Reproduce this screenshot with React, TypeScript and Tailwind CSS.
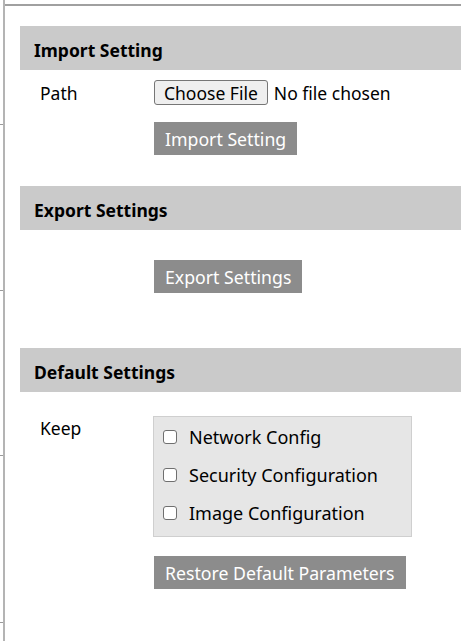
import React from "react";

function SectionHeader({ title }: { title: string }) {
  return (
    <div className="flex h-[44px] items-center bg-[#cacaca] pl-[14px] pt-[3px] text-[17.5px] font-bold text-black">
      {title}
    </div>
  );
}

function GrayButton({ label }: { label: string }) {
  return (
    <button
      type="button"
      className="h-[33px] bg-[#8c8c8c] px-[11px] pt-[2px] text-[17.7px] leading-none text-white"
    >
      {label}
    </button>
  );
}

export default function App() {
  const keepOptions = ["Network Config", "Security Configuration", "Image Configuration"];

  return (
    <div
      className="flex h-[641px] w-[461px] overflow-hidden bg-white text-[17.5px] leading-[24px] text-black"
      style={{ fontFamily: '"Noto Sans", "Open Sans", sans-serif' }}
    >
      {/* slice of the side menu */}
      <div className="flex w-[3px] shrink-0 flex-col">
        <div className="h-[125px] border-b border-[#9a9a9a]" />
        <div className="h-[166px] border-b border-[#9a9a9a]" />
        <div className="h-[165px] border-b border-[#9a9a9a]" />
        <div className="h-[167px] border-b border-[#9a9a9a]" />
      </div>

      <div className="flex-1 border-l-2 border-[#b4b4b4]">
        <div className="mt-[4px] border-t-2 border-[#a0a0a0] pl-[15px] pt-[20px]">
          <SectionHeader title="Import Setting" />
          <div className="mt-[10px] flex h-[25px] items-center">
            <span className="w-[134px] pl-[20px]">Path</span>
            <input
              type="file"
              className="text-[17.5px] file:mr-[6px] file:h-[25px] file:rounded-[3px] file:border file:border-solid file:border-[#767676] file:bg-[#efefef] file:px-[9px] file:text-[17.5px] file:text-black"
            />
          </div>
          <div className="flex pl-[134px] pt-[17px]">
            <GrayButton label="Import Setting" />
          </div>

          <div className="pt-[31px]">
            <SectionHeader title="Export Settings" />
          </div>
          <div className="flex pl-[134px] pt-[30px]">
            <GrayButton label="Export Settings" />
          </div>

          <div className="pt-[55px]">
            <SectionHeader title="Default Settings" />
          </div>
          <div className="flex pt-[24px]">
            <span className="w-[133px] pl-[20px]">Keep</span>
            <div className="flex w-[259px] flex-col gap-[13px] border border-[#cfcfcf] bg-[#e6e6e6] pb-[11px] pl-[9px] pt-[7px] text-[18px]">
              {keepOptions.map((opt) => (
                <label key={opt} className="flex h-[25px] items-center gap-[12px]">
                  <input
                    type="checkbox"
                    className="h-[14px] w-[14px] appearance-none rounded-[3px] border border-[#6f6f6f] bg-white"
                  />
                  <span>{opt}</span>
                </label>
              ))}
            </div>
          </div>
          <div className="flex pl-[134px] pt-[19px]">
            <GrayButton label="Restore Default Parameters" />
          </div>
        </div>
      </div>
    </div>
  );
}
